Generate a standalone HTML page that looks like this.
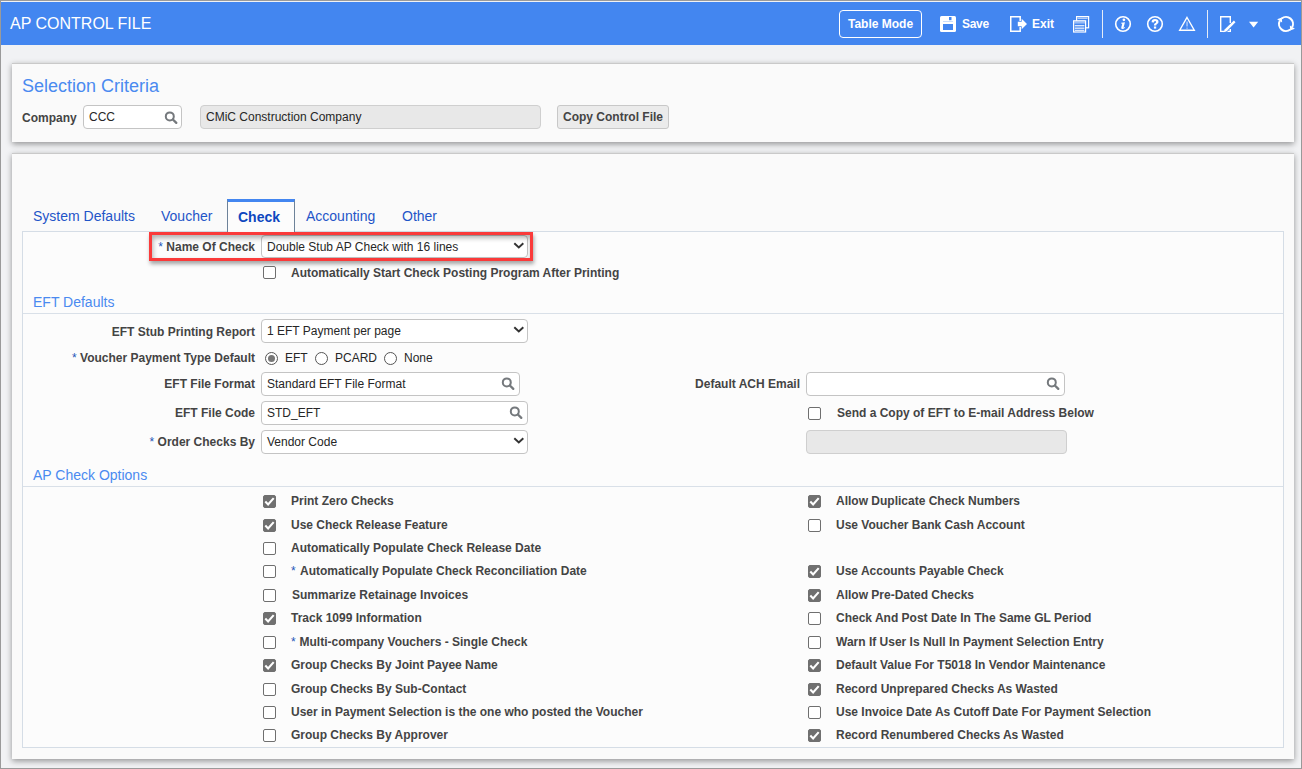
<!DOCTYPE html><html><head><meta charset="utf-8"><style>
*{box-sizing:border-box;margin:0;padding:0}
html,body{width:1302px;height:769px;overflow:hidden;background:#f1f2f4;font-family:"Liberation Sans",sans-serif;color:#333}
.a{position:absolute;white-space:nowrap}
.frame{position:absolute;left:0;top:0;width:1302px;height:769px;border:1px solid #9a9a9a;border-right-color:#999}
.hdr{position:absolute;left:1px;top:2px;width:1300px;height:43px;background:#4386f0}
.title{left:10px;top:15px;font-size:16px;line-height:18px;color:#fff}
.panel{position:absolute;background:#fafafa;border-top:1px solid #c9c9c9;box-shadow:0 2px 6px rgba(0,0,0,.4)}
.lbl{font-size:12px;line-height:14px;font-weight:bold;color:#444}
.rl{position:absolute;white-space:nowrap;font-size:12px;line-height:14px;font-weight:bold;color:#444;text-align:right;left:0;width:255px}
.txt{font-size:12px;line-height:14px;color:#262626}
.inp{position:absolute;background:#fff;border:1px solid #c4c4c4;border-radius:4px}
.dis{position:absolute;background:#e8e8e8;border:1px solid #cfcfcf;border-radius:4px}
.sel{position:absolute;background:#fff;border:1px solid #c4c4c4;border-radius:4px}
.req{color:#2556b8;font-weight:normal}
.cb{position:absolute;width:13px;height:13px;border:1px solid #6f6f6f;border-radius:2px;background:#fff}
.cb.on{background:#707070;border-color:#707070}
.cb svg{position:absolute;left:0;top:0}
.sec{font-size:14px;line-height:16px;color:#4a8af0}
.hl{position:absolute;height:1px;background:#d9e0e8}
.tab{font-size:14px;line-height:16px;color:#1f55c8}
.hbtn{font-size:12px;line-height:14px;font-weight:bold;color:#fff}
.ic{position:absolute}
</style></head><body>
<div class="frame"></div>
<div class="hdr"></div>
<div class="a title">AP CONTROL FILE</div>
<div class="a" style="left:839px;top:10px;width:83px;height:28px;border:1px solid #fff;border-radius:4px"></div>
<div class="a hbtn" style="left:848px;top:17px">Table Mode</div>
<svg class="ic" style="left:940px;top:16px" width="16" height="16" viewBox="0 0 16 16">
<rect x="0" y="0" width="16" height="16" rx="1.5" fill="#fff"/>
<rect x="3" y="8" width="10" height="6" fill="#4386f0"/>
<rect x="9" y="1" width="2.5" height="3.2" fill="#4386f0"/>
<rect x="3" y="5.2" width="10" height="0.8" fill="#4386f0" opacity=".35"/>
</svg>
<div class="a hbtn" style="left:962px;top:17px;letter-spacing:-0.3px">Save</div>
<svg class="ic" style="left:1010px;top:16px" width="18" height="16" viewBox="0 0 18 16">
<path d="M10.2 5 V0.75 H0.75 V15.25 H10.2 V11" fill="none" stroke="#fff" stroke-width="1.5"/>
<path d="M7.8 5.7 H11.7 V2.8 L17 8 L11.7 13.2 V10.3 H7.8 Z" fill="#fff"/>
</svg>
<div class="a hbtn" style="left:1032px;top:17px">Exit</div>
<svg class="ic" style="left:1072px;top:15px" width="18" height="18" viewBox="0 0 18 18">
<rect x="4.6" y="1.6" width="12" height="11.2" fill="none" stroke="#fff" stroke-width="1.2"/>
<rect x="5.6" y="2.6" width="10" height="1.4" fill="#fff" opacity=".6"/>
<rect x="1.6" y="5.8" width="12" height="11.2" fill="#4386f0" stroke="#fff" stroke-width="1.2"/>
<rect x="2.2" y="6.4" width="10.8" height="2.2" fill="#fff" opacity=".45"/>
<rect x="2.8" y="10.2" width="9.6" height="1.1" fill="#fff"/>
<rect x="2.8" y="12.6" width="9.6" height="1.1" fill="#fff"/>
<rect x="2.8" y="14.8" width="9.6" height="1" fill="#fff"/>
</svg>
<div class="a" style="left:1102px;top:10px;width:1px;height:28px;background:#e6ecf7"></div>
<svg class="ic" style="left:1114px;top:15px" width="18" height="18" viewBox="0 0 18 18">
<circle cx="9" cy="9" r="7.3" fill="none" stroke="#fff" stroke-width="1.6"/>
<circle cx="9.9" cy="4.8" r="1.35" fill="#fff"/><path d="M7.2 7.7 L11 7.2 L9.6 12.3 Q9.5 12.9 10.1 12.5 L10.7 12.1 L11 12.7 Q9.6 14 8.2 14 Q6.8 14 7.3 12.3 L8.3 8.8 L7.1 8.6 Z" fill="#fff"/>
</svg>
<svg class="ic" style="left:1146px;top:15px" width="18" height="18" viewBox="0 0 18 18">
<circle cx="9" cy="9" r="7.3" fill="none" stroke="#fff" stroke-width="1.6"/>
<path d="M5.6 7.3 Q5.6 4.1 9 4.1 Q12.5 4.1 12.5 6.9 Q12.5 8.3 11 9.1 Q10.2 9.6 10.2 10.6 H7.9 Q7.8 8.9 9.2 8.1 Q10.1 7.6 10.1 6.9 Q10.1 6 9 6 Q7.9 6 7.9 7.5 Z" fill="#fff"/>
<rect x="7.9" y="11.5" width="2.3" height="2.1" fill="#fff"/>
</svg>
<svg class="ic" style="left:1178px;top:15px" width="18" height="18" viewBox="0 0 18 18">
<path d="M9 2.5 L16.3 15.2 H1.7 Z" fill="none" stroke="#fff" stroke-width="1.4" stroke-linejoin="miter"/>
<rect x="8.5" y="6.5" width="1.1" height="5" fill="#fff" opacity=".75"/>
<rect x="8.5" y="12.6" width="1.1" height="1.1" fill="#fff" opacity=".75"/>
</svg>
<div class="a" style="left:1207px;top:10px;width:1px;height:28px;background:#e6ecf7"></div>
<svg class="ic" style="left:1219px;top:15px" width="18" height="18" viewBox="0 0 18 18">
<path d="M11.3 8 V1.7 H1.7 V16.4 H5" fill="none" stroke="#fff" stroke-width="1.4"/>
<path d="M8.5 16.4 H11.3 V14" fill="none" stroke="#fff" stroke-width="1.4"/>
<path d="M14.9 5.6 L16.5 7.2 L7.4 16.5 L4.6 17.3 L5.6 14.6 Z" fill="#fff"/>
</svg>
<svg class="ic" style="left:1249px;top:21px" width="10" height="8" viewBox="0 0 10 8">
<path d="M0 0.8 H9.2 L4.6 6.6 Z" fill="#fff"/>
</svg>
<svg class="ic" style="left:1277px;top:15px" width="18" height="18" viewBox="0 0 18 18">
<path d="M4.69 3.48 A7 7 0 0 1 15.18 12.29" fill="none" stroke="#fff" stroke-width="2"/>
<path d="M13.31 14.52 A7 7 0 0 1 2.82 5.71" fill="none" stroke="#fff" stroke-width="2"/>
<path d="M13.13 15.40 L17.85 13.76 L12.88 10.41 Z" fill="#fff"/>
<path d="M4.87 2.60 L0.15 4.24 L5.12 7.59 Z" fill="#fff"/>
</svg>
<div class="panel" style="left:12px;top:63px;width:1282px;height:79px"></div>
<div class="a" style="left:22px;top:76px;font-size:18px;line-height:20px;color:#4a8af0">Selection Criteria</div>
<div class="a lbl" style="left:22px;top:111px">Company</div>
<div class="inp" style="left:83px;top:105px;width:99px;height:24px"></div>
<div class="a txt" style="left:89px;top:110px">CCC</div>
<svg class="ic" style="left:164px;top:111px" width="14" height="14" viewBox="0 0 14 14">
<circle cx="5.8" cy="5.4" r="4.0" fill="none" stroke="#75797d" stroke-width="2"/>
<path d="M8.9 8.5 L12.3 11.9" stroke="#75797d" stroke-width="2.3" stroke-linecap="round"/>
</svg>
<div class="dis" style="left:200px;top:105px;width:341px;height:24px"></div>
<div class="a txt" style="left:206px;top:110px">CMiC Construction Company</div>
<div class="a" style="left:557px;top:105px;width:112px;height:24px;background:#ebebeb;border:1px solid #c8c8c8;border-radius:3px"></div>
<div class="a lbl" style="left:563px;top:110px">Copy Control File</div>
<div class="panel" style="left:12px;top:153px;width:1282px;height:606px"></div>
<div class="a" style="left:22px;top:231px;width:1262px;height:517px;border:1px solid #d5dde6;background:#fcfcfc"></div>
<div class="a" style="left:227px;top:199px;width:68px;height:33px;background:#fcfcfc;border:1px solid #6d8299;border-top:3px solid #4386f0;border-bottom:none"></div>
<div class="a tab" style="left:33px;top:208px;">System Defaults</div>
<div class="a tab" style="left:161px;top:208px;">Voucher</div>
<div class="a tab" style="left:238px;top:208px;font-weight:bold;color:#0e47bf;top:209px">Check</div>
<div class="a tab" style="left:306px;top:208px;">Accounting</div>
<div class="a tab" style="left:402px;top:208px;">Other</div>
<div class="rl" style="top:240px;width:255px"><span class="req">* </span>Name Of Check</div>
<div class="sel" style="left:261px;top:235px;width:267px;height:23px"></div>
<div class="a txt" style="left:267px;top:240px">Double Stub AP Check with 16 lines</div>
<svg class="ic" style="left:513px;top:242px" width="11" height="8" viewBox="0 0 11 8">
<path d="M1.3 1.3 L5.8 5.4 L10.3 1.3" fill="none" stroke="#333" stroke-width="2"/>
</svg>
<div class="a" style="left:149px;top:232px;width:384px;height:29px;border:3px solid #fa3a3a;box-shadow:1px 3px 4px rgba(0,0,0,.35), inset 1px 3px 5px rgba(0,0,0,.3)"></div>
<div class="cb" style="left:263px;top:266px"></div>
<div class="a lbl" style="left:291px;top:266px">Automatically Start Check Posting Program After Printing</div>
<div class="a sec" style="left:33px;top:294px">EFT Defaults</div>
<div class="hl" style="left:23px;top:313px;width:1260px"></div>
<div class="rl" style="top:325px;width:255px">EFT Stub Printing Report</div>
<div class="sel" style="left:261px;top:319px;width:267px;height:24px"></div>
<div class="a txt" style="left:267px;top:324px">1 EFT Payment per page</div>
<svg class="ic" style="left:513px;top:326px" width="11" height="8" viewBox="0 0 11 8">
<path d="M1.3 1.3 L5.8 5.4 L10.3 1.3" fill="none" stroke="#333" stroke-width="2"/>
</svg>
<div class="rl" style="top:351px;width:255px"><span class="req">* </span>Voucher Payment Type Default</div>
<div class="a" style="left:265px;top:352px;width:13px;height:13px;border:1px solid #555;border-radius:50%;background:#fff"><div style="position:absolute;left:2px;top:2px;width:7px;height:7px;border-radius:50%;background:#777"></div></div>
<div class="a txt" style="left:285px;top:351px">EFT</div>
<div class="a" style="left:315px;top:352px;width:13px;height:13px;border:1px solid #555;border-radius:50%;background:#fff"></div>
<div class="a txt" style="left:335px;top:351px">PCARD</div>
<div class="a" style="left:384px;top:352px;width:13px;height:13px;border:1px solid #555;border-radius:50%;background:#fff"></div>
<div class="a txt" style="left:404px;top:351px">None</div>
<div class="rl" style="top:377px;width:255px">EFT File Format</div>
<div class="inp" style="left:261px;top:372px;width:259px;height:24px"></div>
<div class="a txt" style="left:267px;top:377px">Standard EFT File Format</div>
<svg class="ic" style="left:501px;top:377px" width="14" height="14" viewBox="0 0 14 14">
<circle cx="5.8" cy="5.4" r="4.0" fill="none" stroke="#75797d" stroke-width="2"/>
<path d="M8.9 8.5 L12.3 11.9" stroke="#75797d" stroke-width="2.3" stroke-linecap="round"/>
</svg>
<div class="rl" style="top:406px;width:255px">EFT File Code</div>
<div class="inp" style="left:261px;top:401px;width:267px;height:24px"></div>
<div class="a txt" style="left:267px;top:406px">STD_EFT</div>
<svg class="ic" style="left:509px;top:406px" width="14" height="14" viewBox="0 0 14 14">
<circle cx="5.8" cy="5.4" r="4.0" fill="none" stroke="#75797d" stroke-width="2"/>
<path d="M8.9 8.5 L12.3 11.9" stroke="#75797d" stroke-width="2.3" stroke-linecap="round"/>
</svg>
<div class="rl" style="top:435px;width:255px"><span class="req">* </span>Order Checks By</div>
<div class="sel" style="left:261px;top:430px;width:267px;height:24px"></div>
<div class="a txt" style="left:267px;top:435px">Vendor Code</div>
<svg class="ic" style="left:513px;top:437px" width="11" height="8" viewBox="0 0 11 8">
<path d="M1.3 1.3 L5.8 5.4 L10.3 1.3" fill="none" stroke="#333" stroke-width="2"/>
</svg>
<div class="rl" style="top:377px;width:800px">Default ACH Email</div>
<div class="inp" style="left:806px;top:372px;width:259px;height:24px"></div>
<svg class="ic" style="left:1046px;top:377px" width="14" height="14" viewBox="0 0 14 14">
<circle cx="5.8" cy="5.4" r="4.0" fill="none" stroke="#75797d" stroke-width="2"/>
<path d="M8.9 8.5 L12.3 11.9" stroke="#75797d" stroke-width="2.3" stroke-linecap="round"/>
</svg>
<div class="cb" style="left:808px;top:407px"></div>
<div class="a lbl" style="left:837px;top:406px">Send a Copy of EFT to E-mail Address Below</div>
<div class="dis" style="left:806px;top:430px;width:261px;height:24px"></div>
<div class="a sec" style="left:33px;top:467px">AP Check Options</div>
<div class="hl" style="left:23px;top:486px;width:1260px"></div>
<div class="cb on" style="left:263px;top:495px"><svg style="left:-1px;top:-1px" width="13" height="13" viewBox="0 0 13 13"><path d="M2.3 6.5 L5.1 9.4 L10.7 3.1" fill="none" stroke="#fff" stroke-width="2.1"/></svg></div>
<div class="a lbl" style="left:291px;top:494px">Print Zero Checks</div>
<div class="cb on" style="left:808px;top:495px"><svg style="left:-1px;top:-1px" width="13" height="13" viewBox="0 0 13 13"><path d="M2.3 6.5 L5.1 9.4 L10.7 3.1" fill="none" stroke="#fff" stroke-width="2.1"/></svg></div>
<div class="a lbl" style="left:836px;top:494px">Allow Duplicate Check Numbers</div>
<div class="cb on" style="left:263px;top:519px"><svg style="left:-1px;top:-1px" width="13" height="13" viewBox="0 0 13 13"><path d="M2.3 6.5 L5.1 9.4 L10.7 3.1" fill="none" stroke="#fff" stroke-width="2.1"/></svg></div>
<div class="a lbl" style="left:291px;top:518px">Use Check Release Feature</div>
<div class="cb" style="left:808px;top:519px"></div>
<div class="a lbl" style="left:836px;top:518px">Use Voucher Bank Cash Account</div>
<div class="cb" style="left:263px;top:542px"></div>
<div class="a lbl" style="left:291px;top:541px">Automatically Populate Check Release Date</div>
<div class="cb" style="left:263px;top:565px"></div>
<div class="a lbl" style="left:291px;top:564px"><span class="req" style="margin-right:1px">* </span>Automatically Populate Check Reconciliation Date</div>
<div class="cb on" style="left:808px;top:565px"><svg style="left:-1px;top:-1px" width="13" height="13" viewBox="0 0 13 13"><path d="M2.3 6.5 L5.1 9.4 L10.7 3.1" fill="none" stroke="#fff" stroke-width="2.1"/></svg></div>
<div class="a lbl" style="left:836px;top:564px">Use Accounts Payable Check</div>
<div class="cb" style="left:263px;top:589px"></div>
<div class="a lbl" style="left:292px;top:588px">Summarize Retainage Invoices</div>
<div class="cb on" style="left:808px;top:589px"><svg style="left:-1px;top:-1px" width="13" height="13" viewBox="0 0 13 13"><path d="M2.3 6.5 L5.1 9.4 L10.7 3.1" fill="none" stroke="#fff" stroke-width="2.1"/></svg></div>
<div class="a lbl" style="left:836px;top:588px">Allow Pre-Dated Checks</div>
<div class="cb on" style="left:263px;top:612px"><svg style="left:-1px;top:-1px" width="13" height="13" viewBox="0 0 13 13"><path d="M2.3 6.5 L5.1 9.4 L10.7 3.1" fill="none" stroke="#fff" stroke-width="2.1"/></svg></div>
<div class="a lbl" style="left:291px;top:611px">Track 1099 Information</div>
<div class="cb" style="left:808px;top:612px"></div>
<div class="a lbl" style="left:836px;top:611px">Check And Post Date In The Same GL Period</div>
<div class="cb" style="left:263px;top:636px"></div>
<div class="a lbl" style="left:291px;top:635px"><span class="req" style="margin-right:0.5px">* </span>Multi-company Vouchers - Single Check</div>
<div class="cb" style="left:808px;top:636px"></div>
<div class="a lbl" style="left:836px;top:635px">Warn If User Is Null In Payment Selection Entry</div>
<div class="cb on" style="left:263px;top:659px"><svg style="left:-1px;top:-1px" width="13" height="13" viewBox="0 0 13 13"><path d="M2.3 6.5 L5.1 9.4 L10.7 3.1" fill="none" stroke="#fff" stroke-width="2.1"/></svg></div>
<div class="a lbl" style="left:291px;top:658px">Group Checks By Joint Payee Name</div>
<div class="cb on" style="left:808px;top:659px"><svg style="left:-1px;top:-1px" width="13" height="13" viewBox="0 0 13 13"><path d="M2.3 6.5 L5.1 9.4 L10.7 3.1" fill="none" stroke="#fff" stroke-width="2.1"/></svg></div>
<div class="a lbl" style="left:836px;top:658px">Default Value For T5018 In Vendor Maintenance</div>
<div class="cb" style="left:263px;top:683px"></div>
<div class="a lbl" style="left:291px;top:682px">Group Checks By Sub-Contact</div>
<div class="cb on" style="left:808px;top:683px"><svg style="left:-1px;top:-1px" width="13" height="13" viewBox="0 0 13 13"><path d="M2.3 6.5 L5.1 9.4 L10.7 3.1" fill="none" stroke="#fff" stroke-width="2.1"/></svg></div>
<div class="a lbl" style="left:836px;top:682px">Record Unprepared Checks As Wasted</div>
<div class="cb" style="left:263px;top:706px"></div>
<div class="a lbl" style="left:291px;top:705px">User in Payment Selection is the one who posted the Voucher</div>
<div class="cb" style="left:808px;top:706px"></div>
<div class="a lbl" style="left:836px;top:705px">Use Invoice Date As Cutoff Date For Payment Selection</div>
<div class="cb" style="left:263px;top:729px"></div>
<div class="a lbl" style="left:291px;top:728px">Group Checks By Approver</div>
<div class="cb on" style="left:808px;top:729px"><svg style="left:-1px;top:-1px" width="13" height="13" viewBox="0 0 13 13"><path d="M2.3 6.5 L5.1 9.4 L10.7 3.1" fill="none" stroke="#fff" stroke-width="2.1"/></svg></div>
<div class="a lbl" style="left:836px;top:728px">Record Renumbered Checks As Wasted</div>
</body></html>
